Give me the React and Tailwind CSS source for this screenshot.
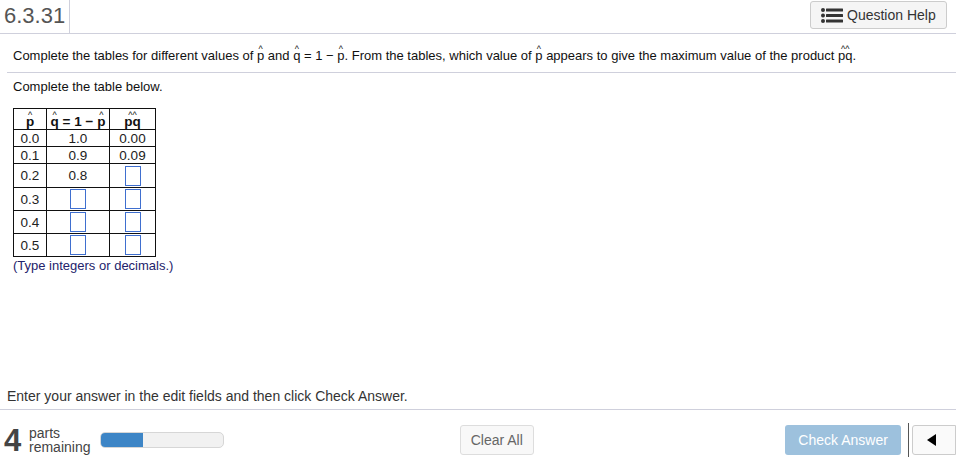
const ROWS = [
  { p: "0.0", q: "1.0", pq: "0.00" },
  { p: "0.1", q: "0.9", pq: "0.09" },
  { p: "0.2", q: "0.8", pq: null },
  { p: "0.3", q: null, pq: null },
  { p: "0.4", q: null, pq: null },
  { p: "0.5", q: null, pq: null },
];

function Hat({ children, mark = "^" }) {
  return (
    <span className="relative inline-block">
      {children}
      <span className="absolute left-1/2 -translate-x-1/2 top-[-3px] text-[9px] leading-none font-normal">
        {mark}
      </span>
    </span>
  );
}

function Box() {
  return (
    <input
      type="text"
      className="w-[16px] h-[20px] border border-[#3f6fcf] bg-white outline-none align-middle"
    />
  );
}

function ListIcon() {
  return (
    <svg width="22" height="15" viewBox="0 0 22 15" className="shrink-0">
      <circle cx="2" cy="2" r="2" fill="#333" />
      <circle cx="2" cy="7.5" r="2" fill="#333" />
      <circle cx="2" cy="13" r="2" fill="#333" />
      <rect x="5" y="0.5" width="17" height="3" rx="0.5" fill="#333" />
      <rect x="5" y="6" width="17" height="3" rx="0.5" fill="#333" />
      <rect x="5" y="11.5" width="17" height="3" rx="0.5" fill="#333" />
    </svg>
  );
}

export default function App() {
  return (
    <div className="w-[956px] h-[463px] flex flex-col bg-white text-[#111] font-['Liberation_Sans',Arial,sans-serif] overflow-hidden">
      {/* Header */}
      <div className="h-[34px] flex items-stretch border-b border-[#cfd0dc] shrink-0">
        <div className="w-[70px] border-r border-[#cfd0dc] pl-[4px] pt-[3px] text-[22px] leading-[26px] text-[#555]">
          6.3.31
        </div>
        <div className="flex-1" />
        <button className="mr-[9px] mt-[1px] w-[137px] h-[28px] flex items-center gap-[4px] pl-[10px] bg-[#f5f5f5] border border-[#cccccc] rounded-[3px] text-[14px] text-[#333]">
          <ListIcon />
          Question Help
        </button>
      </div>

      {/* Question */}
      <div className="pl-[7px]">
        <div className="pl-[6px] pt-[14px] pb-[8px] text-[13px] leading-[16px] border-b border-[#cfd0dc]">
          Complete the tables for different values of <Hat>p</Hat> and <Hat>q</Hat> = 1 − <Hat>p</Hat>. From the
          tables, which value of <Hat>p</Hat> appears to give the maximum value of the product{" "}
          <Hat mark="^^">pq</Hat>.
        </div>
        <div className="pl-[6px] pt-[6px] text-[13px] leading-[16px]">Complete the table below.</div>

        <div className="pl-[6px] mt-[13px]">
          <table className="border-collapse text-[13.5px] leading-[15px]">
            <thead>
              <tr className="h-[21px]">
                <th className="w-[33px] border border-[#111] font-bold pt-[4px]">
                  <Hat>p</Hat>
                </th>
                <th className="w-[63px] border border-[#111] font-bold pt-[4px]">
                  <Hat>q</Hat> = 1 − <Hat>p</Hat>
                </th>
                <th className="w-[46px] border border-[#111] font-bold pt-[4px]">
                  <Hat mark="^^">pq</Hat>
                </th>
              </tr>
            </thead>
            <tbody>
              {ROWS.map((r, i) => (
                <tr key={r.p} className={i < 2 ? "h-[17px]" : i === 2 ? "h-[24px]" : "h-[23px]"}>
                  <td className="border border-[#111] text-center text-[#222]">{r.p}</td>
                  <td className="border border-[#111] text-center text-[#222]">{r.q ?? <Box />}</td>
                  <td className="border border-[#111] text-center text-[#222]">{r.pq ?? <Box />}</td>
                </tr>
              ))}
            </tbody>
          </table>
          <div className="mt-[2px] text-[13px] leading-[14px] text-[#23236b]">(Type integers or decimals.)</div>
        </div>
      </div>

      {/* Footer */}
      <div className="mt-auto shrink-0">
        <div className="pl-[7px] h-[27px] leading-[27px] text-[14px] text-[#333] border-b border-[#cfd0dc]">
          Enter your answer in the edit fields and then click Check Answer.
        </div>
        <div className="h-[53px] pt-[7px] flex items-center">
          <div className="ml-[4px] w-[17px] text-[31px] font-bold leading-none text-[#444]">4</div>
          <div className="ml-[8px] w-[64px] text-[14px] leading-[14px] text-[#444]">
            <div>parts</div>
            <div>remaining</div>
          </div>
          <div className="ml-[8px] w-[125px] h-[16px] rounded-[5px] bg-[#f1f1f1] border border-[#d6d6d6] overflow-hidden">
            <div className="w-[42px] h-full bg-[#3d85c6]" />
          </div>
          <button className="ml-[236px] w-[75px] h-[30px] bg-[#f8f8f8] border border-[#dddddd] rounded-[3px] text-[14px] text-[#666]">
            Clear All
          </button>
          <button className="ml-[251px] w-[118px] h-[30px] bg-[#9dc1dd] rounded-[3px] text-[14px] text-white">
            Check Answer
          </button>
          <div className="ml-[7px] w-px h-[34px] bg-[#555]" />
          <button className="ml-[3px] w-[44px] h-[30px] bg-[#fafafa] border border-[#cccccc] rounded-l-[3px] flex items-center pl-[14px]">
            <svg width="9" height="12" viewBox="0 0 9 12">
              <polygon points="9,0 9,12 0,6" fill="#000" />
            </svg>
          </button>
        </div>
      </div>
    </div>
  );
}
